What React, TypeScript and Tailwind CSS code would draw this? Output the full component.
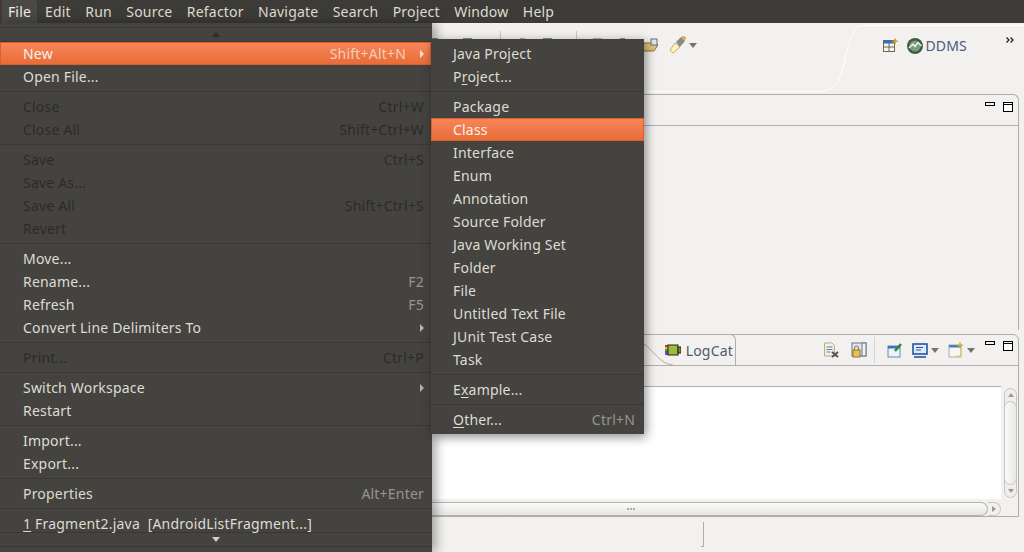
import type { ReactNode } from "react";

type MenuRow =
  | { sep: true }
  | { label: ReactNode; shortcut?: string; off?: boolean; arrow?: boolean; active?: boolean; sep?: false };

const MENUBAR = ["Edit", "Run", "Source", "Refactor", "Navigate", "Search", "Project", "Window", "Help"];

const FILE_MENU: MenuRow[] = [
  { label: "New", shortcut: "Shift+Alt+N", arrow: true, active: true },
  { label: "Open File..." },
  { sep: true },
  { label: "Close", shortcut: "Ctrl+W", off: true },
  { label: "Close All", shortcut: "Shift+Ctrl+W", off: true },
  { sep: true },
  { label: "Save", shortcut: "Ctrl+S", off: true },
  { label: "Save As...", off: true },
  { label: "Save All", shortcut: "Shift+Ctrl+S", off: true },
  { label: "Revert", off: true },
  { sep: true },
  { label: "Move..." },
  { label: "Rename...", shortcut: "F2" },
  { label: "Refresh", shortcut: "F5" },
  { label: "Convert Line Delimiters To", arrow: true },
  { sep: true },
  { label: "Print...", shortcut: "Ctrl+P", off: true },
  { sep: true },
  { label: "Switch Workspace", arrow: true },
  { label: "Restart" },
  { sep: true },
  { label: "Import..." },
  { label: "Export..." },
  { sep: true },
  { label: "Properties", shortcut: "Alt+Enter" },
  { sep: true },
  { label: <><u className="underline-offset-2">1</u> Fragment2.java&nbsp; [AndroidListFragment...]</> },
];

const NEW_MENU: MenuRow[] = [
  { label: "Java Project" },
  { label: <>P<u className="underline-offset-2">r</u>oject...</> },
  { sep: true },
  { label: "Package" },
  { label: "Class", active: true },
  { label: "Interface" },
  { label: "Enum" },
  { label: "Annotation" },
  { label: "Source Folder" },
  { label: "Java Working Set" },
  { label: "Folder" },
  { label: "File" },
  { label: "Untitled Text File" },
  { label: "JUnit Test Case" },
  { label: "Task" },
  { sep: true },
  { label: <>E<u className="underline-offset-2">x</u>ample...</> },
  { sep: true },
  { label: <><u className="underline-offset-2">O</u>ther...</>, shortcut: "Ctrl+N" },
];

function Rows({ rows, pad }: { rows: MenuRow[]; pad: string }) {
  return (
    <>
      {rows.map((row, i) => {
        if (row.sep) {
          return (
            <div key={i} className="flex h-[7px] items-center">
              <div className="h-px w-full bg-[#383733]" />
            </div>
          );
        }
        return (
          <div
            key={i}
            className={`flex h-[23px] items-center ${pad} ${
              row.active
                ? "bg-gradient-to-b from-[#f9875a] to-[#e76b36] text-[#f7f3ec] shadow-[inset_0_0_0_1px_#d8632f]"
                : row.off
                  ? "text-[#2c2b28]"
                  : "text-[#dfdbd2]"
            }`}
          >
            <span className="whitespace-nowrap">{row.label}</span>
            {row.shortcut && (
              <span
                className={`ml-auto whitespace-nowrap ${
                  row.active ? "text-[#f6cdb8]" : row.off ? "text-[#2c2b28]" : "text-[#98958d]"
                }`}
              >
                {row.shortcut}
              </span>
            )}
            {row.arrow && (
              <svg viewBox="0 0 4 8" className={`h-2 w-1 ${row.shortcut ? "ml-[14px]" : "ml-auto"}`}>
                <path d="M0 0 L4 4 L0 8 Z" fill={row.active ? "#f7e3d6" : "#b5b2aa"} />
              </svg>
            )}
          </div>
        );
      })}
    </>
  );
}

function ToolbarPeek() {
  return (
    <svg viewBox="0 0 270 40" className="absolute left-[432px] top-px h-[40px] w-[270px]">
      <rect x="68" y="7" width="1" height="9" fill="#c9c7c3" />
      <rect x="144" y="7" width="1" height="9" fill="#c9c7c3" />
      <path d="M0 14.5 h6 M31 14.5 h9" stroke="#6f9c66" />
      <path d="M88 14.5 h5" stroke="#c9a45e" />
      <path d="M111 14.5 h9" stroke="#6f9c66" />
      <path d="M161 14.5 h9" stroke="#bdb384" />
      <path d="M188 14.5 h5" stroke="#8f87b5" />
      {/* folder */}
      <path d="M212 19 L223 19 L226 21 L222 27 L211 27 Z" fill="#e2c27a" stroke="#8d6f3a" />
      <rect x="219" y="15" width="6" height="6" fill="#dfe6ef" stroke="#5e6f87" />
      {/* torch */}
      <path d="M238 26 L243 19 L248 23 L241 29 Z" fill="#fff3c4" stroke="#b08a3a" strokeWidth="0.7" />
      <path d="M244 18 L249 13 L253 17 L248 23 Z" fill="#8a8a86" />
      <path d="M249 13 L251 12 L254 13 L253 17 Z" fill="#e8a33a" />
      <path d="M257 19 h8 l-4 5 z" fill="#77756f" />
    </svg>
  );
}

function Workbench() {
  return (
    <div className="flex h-[529px] flex-col bg-[#f2f1f0]">
      <div className="relative h-[71px] shrink-0">
        <ToolbarPeek />
        {/* perspective switcher curve */}
        <svg viewBox="0 0 1024 71" className="absolute inset-0 h-[71px] w-[1024px]">
          <path
            d="M0 68.5 H822 C836 68.5 842 52 845 36 C849 18 853 2.5 862 2.5 H1024"
            fill="none"
            stroke="#ffffff"
            strokeWidth="1"
          />
        </svg>
        <div className="absolute right-[57px] top-[12px] flex items-center gap-[2px] text-[14px] tracking-[0.2px] text-[#4a5c78]">
          <svg viewBox="0 0 16 16" className="mr-[7px] h-4 w-4">
            <rect x="1.5" y="2.5" width="11" height="11" fill="#f4f4f2" stroke="#6b6750" />
            <rect x="1.5" y="2.5" width="11" height="3" fill="#3a6fb0" />
            <path d="M1.5 9 H12.5 M7 5 V13.5" stroke="#6b6750" />
            <path d="M13 0.5 V6 M10.2 3.2 H15.8" stroke="#d79b2b" strokeWidth="1.6" />
          </svg>
          <svg viewBox="0 0 16 16" className="h-4 w-4">
            <circle cx="8" cy="8" r="8" fill="#3f5c3f" />
            <circle cx="8" cy="8" r="5.6" fill="#7b9a83" />
            <path d="M2 10 L6 6 L8 8.5 L11 4.5 L14.5 8" fill="none" stroke="#f2f2ea" strokeWidth="1.4" />
          </svg>
          <span>DDMS</span>
        </div>
        <svg viewBox="0 0 9 6" className="absolute left-[1006px] top-[14px] h-[6px] w-[9px]">
          <path d="M0.5 0.5 L3 3 L0.5 5.5 M4.5 0.5 L7 3 L4.5 5.5" fill="none" stroke="#222" strokeWidth="1.3" />
        </svg>
      </div>

      <div className="ml-[12px] mr-[5px] flex h-[236px] shrink-0 flex-col rounded-tr-[6px] border border-b-0 border-[#b0aea9]">
        <div className="flex h-[31px] shrink-0 items-start justify-end gap-2 border-b border-[#b0aea9] pr-[5px] pt-[7px]">
          <PaneButtons />
        </div>
      </div>

      <div className="h-[4px] shrink-0" />

      <div className="ml-[12px] mr-[5px] flex h-[183px] shrink-0 flex-col rounded-tr-[6px] border border-[#b0aea9]">
        <div className="flex h-[31px] shrink-0 items-stretch border-b border-[#b0aea9]">
          <div className="relative -mt-px ml-[632px] flex w-[91px] items-center justify-end gap-[5px] rounded-tr-[6px] border-r border-t border-[#b0aea9] pr-[2px] text-[14px] tracking-[0.2px] text-[#4f5a6a]">
            <svg viewBox="0 0 29 23" className="absolute -left-px top-[8px] h-[23px] w-[29px]">
              <path d="M0 1 C10 8 16 21 29 22" fill="none" stroke="#b0aea9" />
            </svg>
            <svg viewBox="0 0 16 12" className="h-3 w-4">
              <rect x="0" y="1" width="3" height="2" fill="#ef2b2b" />
              <rect x="0" y="3" width="3" height="2" fill="#f0c21c" />
              <rect x="0" y="5" width="3" height="2" fill="#31b833" />
              <rect x="0" y="7" width="3" height="2" fill="#2b5cd8" />
              <rect x="0" y="9" width="3" height="2" fill="#a535c9" />
              <rect x="3" y="1" width="10" height="10" fill="#9dbb3c" stroke="#222" />
              <rect x="13" y="3" width="3" height="6" fill="#77922c" stroke="#222" />
            </svg>
            <span>LogCat</span>
          </div>
          <div className="ml-auto flex items-center gap-[9px] pr-[5px]">
            <svg viewBox="0 0 16 16" className="h-4 w-4">
              <path d="M1.5 1 H9 L11.5 3.5 V14 H1.5 Z" fill="#f5f2e4" stroke="#b5ab88" />
              <path d="M3.5 5 H9.5 M3.5 7.5 H9.5 M3.5 10 H7.5" stroke="#5b7fa8" />
              <path d="M9 10 L15 15 M15 10 L9 15" stroke="#55534e" strokeWidth="2" />
            </svg>
            <svg viewBox="0 0 16 16" className="ml-[3px] h-4 w-4">
              <rect x="1" y="1" width="14" height="13" fill="#dce6f1" stroke="#66768c" />
              <rect x="11" y="1" width="4" height="13" fill="#eef2f6" stroke="#66768c" />
              <rect x="2" y="8" width="7" height="7" fill="#e9c25b" stroke="#9a7421" />
              <path d="M3.5 8 V6 A2 2 0 0 1 7.5 6 V8" fill="none" stroke="#9a7421" />
            </svg>
            <div className="-ml-[2px] mr-[3px] h-[26px] w-px bg-[#d6d4d0]" />
            <svg viewBox="0 0 16 16" className="h-4 w-4">
              <rect x="1" y="4" width="12" height="11" fill="#eef3f8" stroke="#6d87a6" />
              <rect x="1" y="4" width="12" height="2.5" fill="#3f77b5" />
              <path d="M8 9 L14 2" stroke="#2e8b3c" strokeWidth="2.6" />
            </svg>
            <div className="flex items-center gap-[3px]">
              <svg viewBox="0 0 16 16" className="h-4 w-4">
                <rect x="1" y="2" width="14" height="10" fill="#dfe9f5" stroke="#1f57a4" strokeWidth="1.6" />
                <path d="M4 5.5 H11 M4 8 H9" stroke="#1f57a4" />
                <path d="M2 15 H14" stroke="#1f57a4" strokeWidth="1.6" />
              </svg>
              <Caret />
            </div>
            <div className="flex items-center gap-[3px]">
              <svg viewBox="0 0 16 16" className="h-4 w-4">
                <rect x="1" y="3" width="12" height="12" fill="#f6f6f2" stroke="#a8b0a0" />
                <rect x="1" y="3" width="12" height="2.5" fill="#4c7fb8" />
                <path d="M12 0.5 V6 M9.3 3.2 H14.8" stroke="#d9ac3a" strokeWidth="1.5" />
                <path d="M13 6 V14 H8" fill="none" stroke="#e4c45e" />
              </svg>
              <Caret />
            </div>
            <div className="mb-[8px] ml-[1px] flex items-start gap-2">
              <PaneButtons />
            </div>
          </div>
        </div>
        <div className="flex min-h-0 flex-1 flex-col">
          <div className="h-[20px] shrink-0" />
          <div className="flex min-h-0 flex-1">
            <div className="min-w-0 flex-1 border-t border-[#b0aea9] bg-white" />
            <div className="w-[17px] shrink-0 pb-px pl-[3px] pr-px pt-[2px]">
              <div className="flex h-full flex-col rounded-full border border-[#c8c6c2] bg-[#efeeec]">
                <div className="flex h-[12px] shrink-0 items-center justify-center">
                  <svg viewBox="0 0 6 4" className="h-[4px] w-[6px]"><path d="M0 4 L3 0 L6 4 Z" fill="#9a9892" /></svg>
                </div>
                <div className="mx-[-1px] flex-1 rounded-full border border-[#c8c6c2] bg-gradient-to-r from-[#fafaf9] to-[#e8e7e5]" />
                <div className="flex h-[12px] shrink-0 items-center justify-center">
                  <svg viewBox="0 0 6 4" className="h-[4px] w-[6px]"><path d="M0 0 L3 4 L6 0 Z" fill="#9a9892" /></svg>
                </div>
              </div>
            </div>
          </div>
          <div className="mt-[3px] flex h-[14px] shrink-0 pr-[17px]">
            <div className="flex flex-1 items-center justify-end gap-px rounded-r-full border-y border-r border-[#b5b3ae] bg-gradient-to-b from-[#fbfbfa] to-[#e6e5e3] pr-[352px]">
              <div className="h-[2px] w-[2px] bg-[#b0aea9]" />
              <div className="h-[2px] w-[2px] bg-[#b0aea9]" />
              <div className="h-[2px] w-[2px] bg-[#b0aea9]" />
            </div>
            <div className="flex w-[13px] items-center justify-center rounded-r-full border-y border-r border-[#c8c6c2]">
              <svg viewBox="0 0 4 6" className="h-[6px] w-[4px]"><path d="M0 0 L4 3 L0 6 Z" fill="#9a9892" /></svg>
            </div>
          </div>
        </div>
      </div>

      <div className="flex h-[35px] shrink-0 pl-[701px] pt-[5px]">
        <div className="h-[25px] w-[3px] border-b border-r border-[#b0aea9]" />
      </div>
    </div>
  );
}

function PaneButtons() {
  return (
    <>
      <div className="h-[4px] w-[10px] border border-black bg-[#f2f1f0]" />
      <div className="h-[10px] w-[10px] border border-black bg-white">
        <div className="h-[2px] border-b border-black" />
      </div>
    </>
  );
}

function Caret() {
  return (
    <svg viewBox="0 0 8 5" className="h-[5px] w-[8px]">
      <path d="M0 0 H8 L4 5 Z" fill="#77756f" />
    </svg>
  );
}

export default function App() {
  return (
    <div className="relative h-[552px] w-[1024px] overflow-hidden bg-[#f2f1f0] font-['Noto_Sans','Open_Sans',sans-serif] text-[14px] tracking-[0.2px]">
      <div className="flex h-[23px] items-center bg-[#3c3b37] pl-[2px] text-[#dfdbd2]">
        <div className="flex h-[23px] w-[35px] items-center justify-center rounded-t-[3px] bg-[#4a4945] text-[#f2efe8]">File</div>
        <div className="ml-[8px] flex gap-[14.4px]">
          {MENUBAR.map((name) => (
            <span key={name}>{name}</span>
          ))}
        </div>
      </div>

      <Workbench />

      {/* File menu */}
      <div className="absolute left-0 top-[23px] z-10 h-[529px] w-[432px] bg-[#444340] pt-[4px] shadow-[4px_0_10px_rgba(0,0,0,0.35)]">
        <div className="flex h-[15px] items-center justify-center border-y border-[#383733]">
          <svg viewBox="0 0 8 5" className="h-[5px] w-2"><path d="M0 5 L4 0 L8 5 Z" fill="#2e2d2a" /></svg>
        </div>
        <Rows rows={FILE_MENU} pad="pl-[23px] pr-[7px] mr-[1px]" />
        <div className="-mt-[3px] flex h-[15px] items-center justify-center border-y border-[#383733]">
          <svg viewBox="0 0 8 5" className="h-[5px] w-2"><path d="M0 0 H8 L4 5 Z" fill="#cfcdc8" /></svg>
        </div>
      </div>

      {/* New submenu */}
      <div className="absolute left-[431px] top-[39px] z-20 w-[213px] bg-[#444340] py-[3px] shadow-[2px_3px_10px_rgba(0,0,0,0.45)]">
        <Rows rows={NEW_MENU} pad="pl-[22px] pr-[9px]" />
      </div>
    </div>
  );
}
